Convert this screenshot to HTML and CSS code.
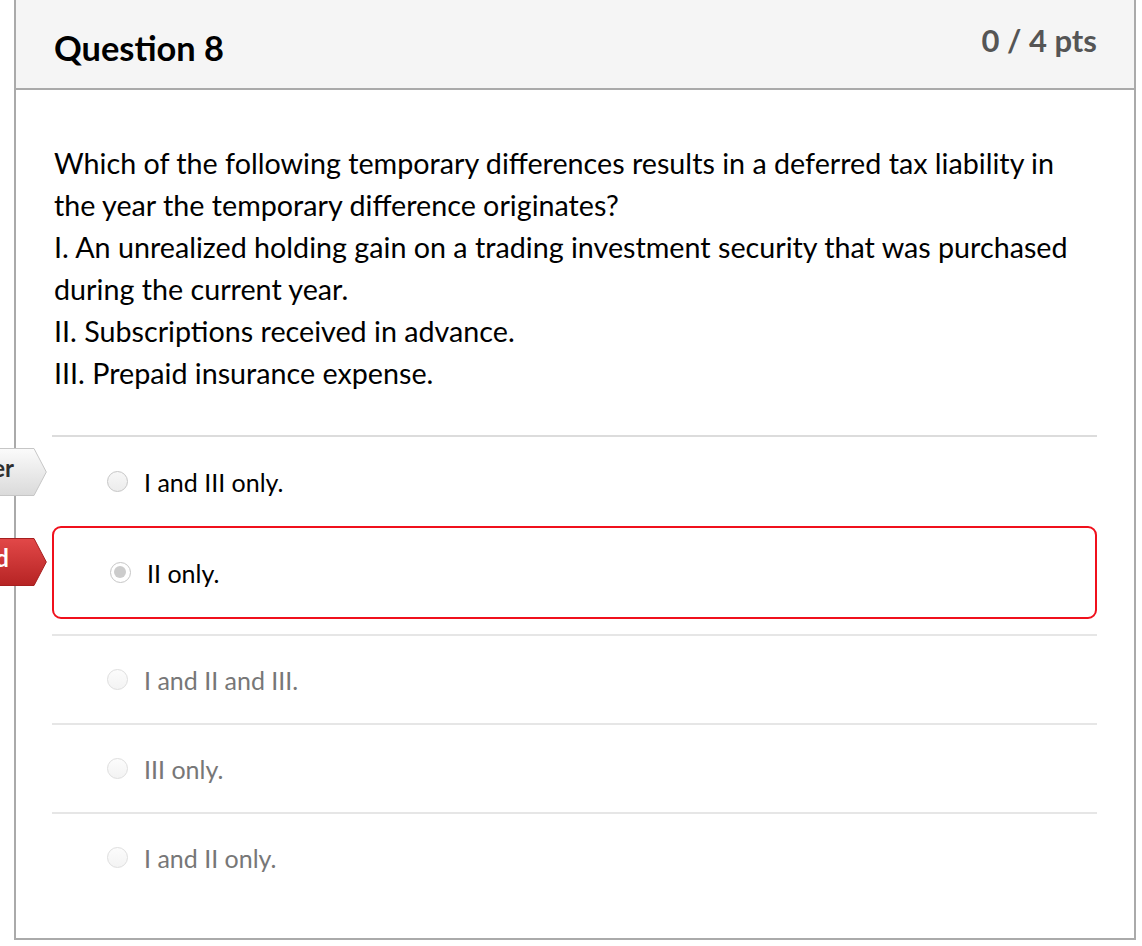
FILE: index.html
```html
<!DOCTYPE html>
<html lang="en">
<head>
<meta charset="utf-8">
<title>Question 8</title>
<link rel="stylesheet" href="styles.css">
</head>
<body>
<div class="question">
  <div class="q-header">
    <h2 class="q-title">Question 8</h2>
    <div class="q-pts">0 / 4 pts</div>
  </div>
  <div class="q-body">
    <div class="q-text">Which of the following temporary differences results in a deferred tax liability in<br>the year the temporary difference originates?<br>I. An unrealized holding gain on a trading investment security that was purchased<br>during the current year.<br>II. Subscriptions received in advance.<br>III. Prepaid insurance expense.</div>
    <div class="answers">
      <div class="answer">
        <span class="radio"></span>
        <span class="answer-text">I and III only.</span>
      </div>
      <div class="answer selected">
        <span class="radio checked"></span>
        <span class="answer-text">II only.</span>
      </div>
      <div class="answer muted">
        <span class="radio"></span>
        <span class="answer-text">I and II and III.</span>
      </div>
      <div class="answer muted">
        <span class="radio"></span>
        <span class="answer-text">III only.</span>
      </div>
      <div class="answer muted">
        <span class="radio"></span>
        <span class="answer-text">I and II only.</span>
      </div>
    </div>
  </div>
  <div class="arrow arrow-correct">
    <svg class="arrow-shape" width="195" height="48" viewBox="0 0 195 48">
      <defs>
        <linearGradient id="gGray" x1="0" y1="0" x2="0" y2="1">
          <stop offset="0" stop-color="#fbfbfb"/>
          <stop offset="1" stop-color="#dadada"/>
        </linearGradient>
      </defs>
      <polygon points="0,0.5 182,0.5 194.3,24 182,47.5 0,47.5" fill="url(#gGray)" stroke="#c6c6c6" stroke-width="1"/>
    </svg>
    <span class="arrow-label">Correct Answer</span>
  </div>
  <div class="arrow arrow-wrong">
    <svg class="arrow-shape" width="195" height="48" viewBox="0 0 195 48">
      <defs>
        <linearGradient id="gRed" x1="0" y1="0" x2="0" y2="1">
          <stop offset="0" stop-color="#e24848"/>
          <stop offset="1" stop-color="#b62424"/>
        </linearGradient>
      </defs>
      <polygon points="0,0.5 182,0.5 194.3,24 182,47.5 0,47.5" fill="url(#gRed)" stroke="#a61f1f" stroke-width="1"/>
    </svg>
    <span class="arrow-label">You Answered</span>
  </div>
</div>
</body>
</html>
```
FILE: styles.css
```css
html, body {
  margin: 0;
  padding: 0;
  background: #ffffff;
}

body {
  font-family: Lato, "Noto Sans", "Liberation Sans", sans-serif;
  color: #000000;
}

.question {
  position: relative;
  margin-left: 14px;
  width: 1122px;
  box-sizing: border-box;
  border: 2px solid #aaaaaa;
  border-top: none;
}

.q-header {
  height: 88px;
  background: #f5f5f5;
  border-bottom: 2px solid #aaaaaa;
  display: flex;
  justify-content: space-between;
  align-items: flex-start;
  padding: 0 37px 0 38px;
}

.q-title {
  margin: 31px 0 0 0;
  font-size: 34.4px;
  line-height: 34px;
  font-weight: 700;
  color: #000000;
}

.q-pts {
  margin-top: 25px;
  font-size: 31px;
  line-height: 31px;
  font-weight: 700;
  color: #555555;
}

.q-body {
  padding: 52px 37px 37px 38px;
}

.q-text {
  font-size: 28.7px;
  line-height: 42px;
  white-space: nowrap;
}

.answers {
  margin: 41px 0 0 -2px;
}

.answer {
  display: flex;
  align-items: center;
  height: 87px;
  border-top: 2px solid #e6e6e6;
  padding-left: 55px;
  font-size: 25px;
}

.answer:first-child {
  border-top-color: #dcdcdc;
  height: 89px;
}

.answer.selected {
  height: 89px;
  border: 2px solid #f0101c;
  border-radius: 9px;
  padding-left: 56px;
  margin-bottom: 15px;
}

.radio {
  flex: none;
  width: 21px;
  height: 21px;
  box-sizing: border-box;
  border-radius: 50%;
  border: 1.5px solid #c6c6c6;
  background: linear-gradient(#f7f7f7, #ececec);
  margin-right: 16px;
  position: relative;
}

.radio.checked {
  background: #ffffff;
}

.radio.checked::after {
  content: "";
  position: absolute;
  left: 3px;
  top: 3px;
  width: 12px;
  height: 12px;
  border-radius: 50%;
  background: #cccccc;
}

.answer.muted .answer-text {
  color: #777777;
}

.answer.muted .radio {
  border-color: #dedede;
  background: linear-gradient(#fcfcfc, #f3f3f3);
}

.arrow {
  position: absolute;
  left: -164px;
  width: 195px;
  height: 48px;
  z-index: 2;
}

.arrow-correct {
  top: 448px;
}

.arrow-wrong {
  top: 538px;
}

.arrow-shape {
  position: absolute;
  left: 0;
  top: 0;
  display: block;
}

.arrow-label {
  position: absolute;
  top: 0;
  font-size: 24px;
  line-height: 40px;
  font-weight: 700;
  white-space: nowrap;
}

.arrow-correct .arrow-label {
  right: 33px;
  color: #2f2f2f;
}

.arrow-wrong .arrow-label {
  right: 38px;
  color: #ffffff;
}
```
